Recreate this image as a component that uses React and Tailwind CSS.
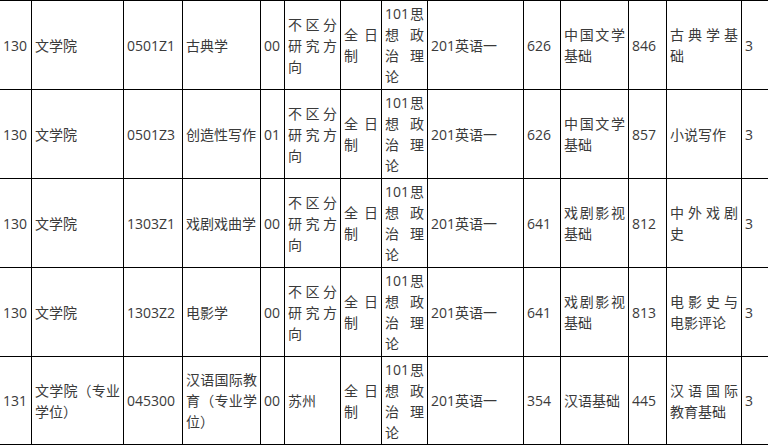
const rows = [
  ['130', '文学院', '0501Z1', '古典学', '00', '不区分研究方向', '全日制', '101思想政治理论', '201英语一', '626', '中国文学基础', '846', '古典学基础', '3'],
  ['130', '文学院', '0501Z3', '创造性写作', '01', '不区分研究方向', '全日制', '101思想政治理论', '201英语一', '626', '中国文学基础', '857', '小说写作', '3'],
  ['130', '文学院', '1303Z1', '戏剧戏曲学', '00', '不区分研究方向', '全日制', '101思想政治理论', '201英语一', '641', '戏剧影视基础', '812', '中外戏剧史', '3'],
  ['130', '文学院', '1303Z2', '电影学', '00', '不区分研究方向', '全日制', '101思想政治理论', '201英语一', '641', '戏剧影视基础', '813', '电影史与电影评论', '3'],
  ['131', '文学院（专业学位）', '045300', '汉语国际教育（专业学位）', '00', '苏州', '全日制', '101思想政治理论', '201英语一', '354', '汉语基础', '445', '汉语国际教育基础', '3'],
];

export default function App() {
  return (
    <div
      className="w-[768px] h-[446px] overflow-hidden bg-white text-[14px] leading-[21px] text-[#3a3a3a]"
      style={{ fontFamily: '"Open Sans", "Noto Sans CJK SC", sans-serif' }}
    >
      <div className="grid w-[800px] grid-cols-[32px_92px_59px_78px_24px_56px_41px_46px_96px_37px_68px_38px_75px_58px] border-t border-black">
        {rows.map((r, i) =>
          r.map((c, j) => (
            <div
              key={i + '-' + j}
              className={
                'flex items-center border-r border-b border-black px-[3px] ' +
                (i === 4 ? 'h-[88px]' : 'h-[89px]')
              }
            >
              <div className="w-full text-justify">{c}</div>
            </div>
          ))
        )}
      </div>
    </div>
  );
}
